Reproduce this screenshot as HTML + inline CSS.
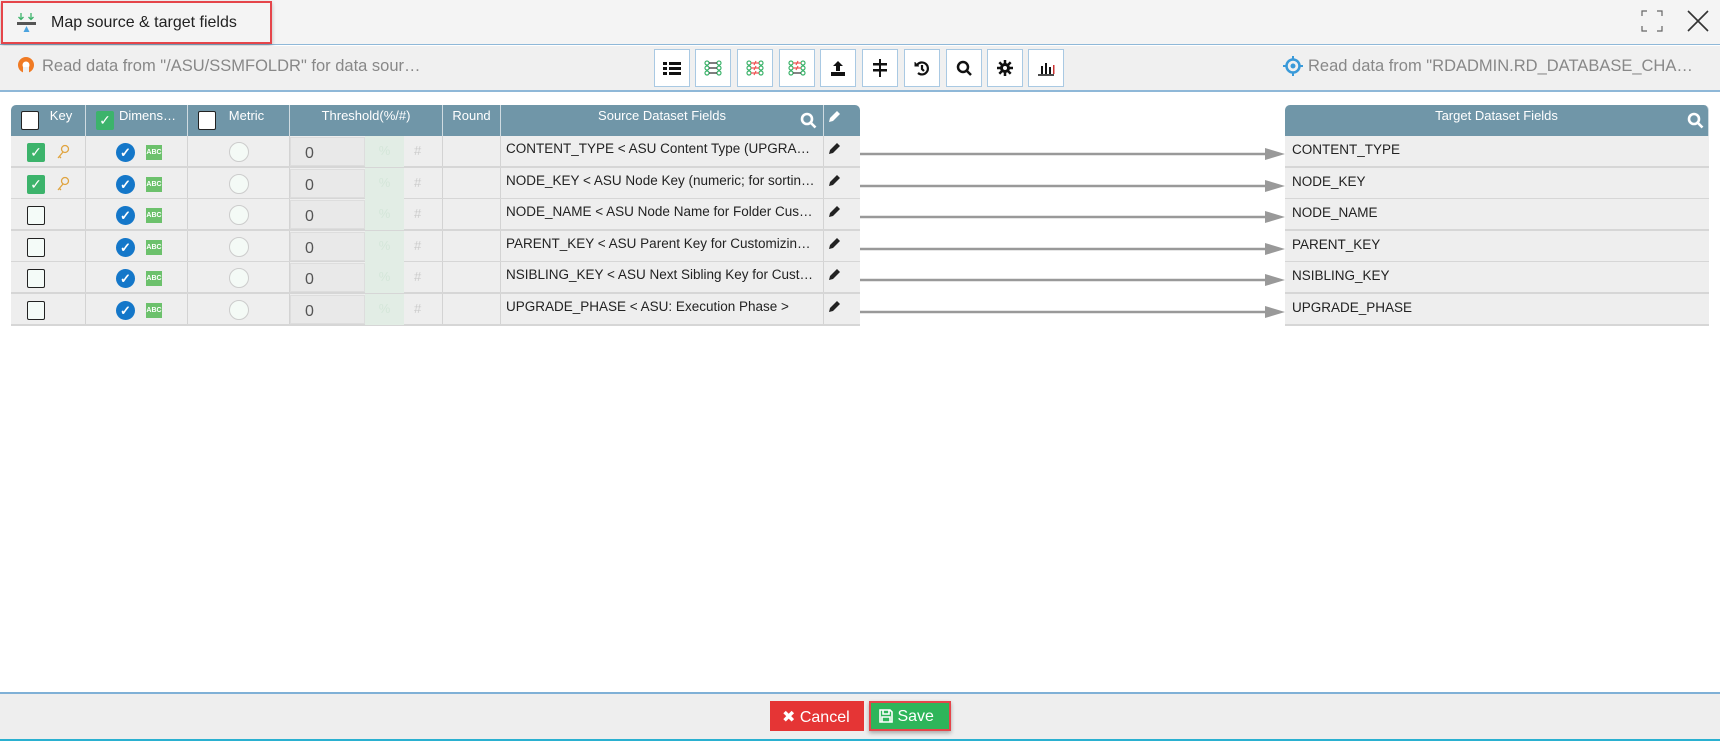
<!DOCTYPE html>
<html><head><meta charset="utf-8"><style>
*{box-sizing:border-box;margin:0;padding:0}
body{width:1720px;height:741px;overflow:hidden;background:#fff;font-family:"Liberation Sans",Arial,sans-serif;position:relative}
.abs{position:absolute}
.hdr{left:0;top:0;width:1720px;height:45px;background:#f4f4f4;border-bottom:1px solid #8fb8d8}
.title{left:1px;top:1px;width:271px;height:43px;border:2px solid #e5454a;box-shadow:0 2px 4px rgba(0,0,0,.25)}
.title span{position:absolute;left:48px;top:11px;font-size:16px;color:#222}
.tb{left:0;top:46px;width:1720px;height:46px;background:#f0f0f0;border-bottom:2px solid #8fb8d8}
.btn{top:49px;width:36px;height:38px;background:#fff;border:1px solid #a9c9e3;display:flex;align-items:center;justify-content:center}
.th{background:#7096a8;color:#fff;font-size:13px;text-align:center;height:31px;top:105px;padding-top:3px;border-right:1px solid #cfdbe1}
.row{left:11px;width:849px;height:32px;background:#eee;border-bottom:2px solid #d6d6d6}
.cell{position:absolute;top:0;height:30px;border-right:1px solid #d3d3d3}
.tgt{left:1285px;width:424px;height:32px;background:#eee;border-bottom:2px solid #d6d6d6;font-size:13.5px;color:#222;padding:6px 0 0 7px}
.cb{width:18px;height:19px;border:1.5px solid #222;border-radius:2px;background:#f4fbf8}
.gcb{width:18px;height:19px;background:#3cb36b;border-radius:2px;color:#fff;font-size:14px;text-align:center;line-height:19px}
.bc{width:19px;height:19px;border-radius:50%;background:#1477c9;color:#fff;font-size:13px;text-align:center;line-height:19px;font-weight:bold}
.abc{width:16px;height:15px;background:#6cc16c;color:#fff;font-size:7px;text-align:center;line-height:15px;font-weight:bold}
.rad{width:20px;height:20px;border-radius:50%;border:1px solid #ccc;background:#f4faf6}
</style></head><body>
<div class="abs hdr"></div>
<div class="abs title">
<svg class="abs" style="left:13px;top:9px" width="22" height="22" viewBox="0 0 22 22"><path d="M5 1v6M2.5 5L5 7.5 7.5 5M15 1v6M12.5 5L15 7.5 17.5 5" stroke="#3cb36b" stroke-width="1.3" fill="none"/><rect x="1" y="10" width="19" height="3" fill="#555"/><path d="M10.5 14l-3 6h6z" fill="#4aa3df"/></svg>
<span>Map source &amp; target fields</span></div>
<svg class="abs" style="left:1641px;top:10px" width="22" height="22" viewBox="0 0 22 22" fill="none" stroke="#666" stroke-width="1.2"><path d="M1 6V1h5M16 1h5v5M21 16v5h-5M6 21H1v-5"/></svg>
<svg class="abs" style="left:1687px;top:10px" width="22" height="22" viewBox="0 0 22 22" stroke="#333" stroke-width="1.6"><path d="M1 1l20 20M21 1L1 21"/></svg>
<div class="abs tb"></div>
<svg class="abs" style="left:17px;top:56px" width="18" height="20" viewBox="0 0 18 20"><circle cx="9" cy="9" r="8" fill="#f07a23"/><circle cx="9" cy="9" r="3.5" fill="#fff"/><rect x="6" y="11" width="6" height="9" fill="#f0f0f0"/></svg>
<div class="abs" style="left:42px;top:57px;font-size:16.5px;color:#888">Read data from "/ASU/SSMFOLDR" for data sour…</div>
<svg class="abs" style="left:1283px;top:56px" width="20" height="20" viewBox="0 0 20 20"><circle cx="10" cy="10" r="6.5" fill="none" stroke="#3a9ad9" stroke-width="2.5"/><circle cx="10" cy="10" r="2.5" fill="#3a9ad9"/><path d="M10 0v4M10 16v4M0 10h4M16 10h4" stroke="#3a9ad9" stroke-width="2"/></svg>
<div class="abs" style="left:1308px;top:57px;font-size:16.5px;color:#888">Read data from "RDADMIN.RD_DATABASE_CHA…</div>
<div class="abs btn" style="left:654px"><svg width="18" height="14"><path d="M0 1h4v3H0zM6 1h12v3H6zM0 6h4v3H0zM6 6h12v3H6zM0 11h4v3H0zM6 11h12v3H6z" fill="#111"/></svg></div>
<div class="abs btn" style="left:695px"><svg width="18" height="16" fill="none" stroke="#3cb36b" stroke-width="1.2"><circle cx="3" cy="3" r="2"/><circle cx="15" cy="3" r="2"/><circle cx="3" cy="8" r="2"/><circle cx="15" cy="8" r="2"/><circle cx="3" cy="13" r="2"/><circle cx="15" cy="13" r="2"/><path d="M5 3h8M5 8h8M5 13h8" stroke="#333"/></svg></div>
<div class="abs btn" style="left:737px"><svg width="18" height="16" fill="none" stroke="#3cb36b" stroke-width="1.2"><circle cx="3" cy="3" r="2"/><circle cx="15" cy="3" r="2"/><circle cx="3" cy="8" r="2"/><circle cx="15" cy="8" r="2"/><circle cx="3" cy="13" r="2"/><circle cx="15" cy="13" r="2"/><path d="M5 3h8M5 8h8M5 13h8M10 1l-2 4M10 6l-2 4M10 11l-2 4" stroke="#e55"/></svg></div>
<div class="abs btn" style="left:779px"><svg width="18" height="16" fill="none" stroke="#3cb36b" stroke-width="1.2"><circle cx="3" cy="3" r="2"/><circle cx="15" cy="3" r="2"/><circle cx="3" cy="8" r="2"/><circle cx="15" cy="8" r="2"/><circle cx="3" cy="13" r="2"/><circle cx="15" cy="13" r="2"/><path d="M5 3h8M5 8h8M10 1l-2 4M10 6l-2 4" stroke="#e55"/><path d="M5 13h8" stroke="#333"/></svg></div>
<div class="abs btn" style="left:820px"><svg width="16" height="16"><path d="M8 1l5 5h-3v5H6V6H3z" fill="#111"/><rect x="1" y="12" width="14" height="4" fill="#111"/></svg></div>
<div class="abs btn" style="left:862px"><svg width="16" height="18"><path d="M7 0h2v18H7z" fill="#111"/><rect x="1" y="4" width="14" height="2.5" fill="#111"/><rect x="1" y="10" width="14" height="2.5" fill="#111"/></svg></div>
<div class="abs btn" style="left:904px"><svg width="16" height="16" fill="none" stroke="#111" stroke-width="2.2"><path d="M3 5a6 6 0 1 1 1 8"/><path d="M8 5v4l2 2"/><path d="M1 2v4h4" fill="#111" stroke-width="1"/></svg></div>
<div class="abs btn" style="left:946px"><svg width="16" height="16" fill="none" stroke="#111" stroke-width="2.5"><circle cx="7" cy="7" r="5"/><path d="M11 11l4 4"/></svg></div>
<div class="abs btn" style="left:987px"><svg width="16" height="16"><circle cx="8" cy="8" r="5" fill="#111"/><path d="M8 0v16M0 8h16M2.3 2.3l11.4 11.4M13.7 2.3L2.3 13.7" stroke="#111" stroke-width="2.5"/><circle cx="8" cy="8" r="2" fill="#fff"/></svg></div>
<div class="abs btn" style="left:1028px"><svg width="18" height="16"><path d="M1 15h16" stroke="#111" stroke-width="1.5"/><path d="M4 6h2v8H4zM8 3h2v11H8zM12 7h2v7h-2z" fill="#111"/><path d="M16 5h1.5v9H16z" fill="#c33"/></svg></div>

<div class="abs th" style="left:11px;width:75px;border-radius:5px 0 0 0"><div class="cb abs" style="left:10px;top:6px;background:#fff"></div><span style="margin-left:26px">Key</span></div>
<div class="abs th" style="left:86px;width:102px"><div class="gcb abs" style="left:10px;top:6px">✓</div><span style="margin-left:22px">Dimens…</span></div>
<div class="abs th" style="left:188px;width:102px"><div class="cb abs" style="left:10px;top:6px;background:#fff"></div><span style="margin-left:16px">Metric</span></div>
<div class="abs th" style="left:290px;width:153px">Threshold(%/#)</div>
<div class="abs th" style="left:443px;width:58px">Round</div>
<div class="abs th" style="left:501px;width:323px">Source Dataset Fields<svg class="abs" style="right:6px;top:7px" width="17" height="17" fill="none" stroke="#fff" stroke-width="2.6"><circle cx="7" cy="7" r="5"/><path d="M11 11l4.5 4.5"/></svg></div>
<div class="abs th" style="left:824px;width:36px;border-radius:0 5px 0 0;border-right:none"><svg class="abs" style="left:4px;top:5px" width="13" height="13"><path d="M1 12l1-4 7-7 3 3-7 7z" fill="#fff"/></svg></div>
<div class="abs th" style="left:1285px;width:424px;border-radius:5px 5px 0 0">Target Dataset Fields<svg class="abs" style="right:4px;top:7px" width="17" height="17" fill="none" stroke="#fff" stroke-width="2.6"><circle cx="7" cy="7" r="5"/><path d="M11 11l4.5 4.5"/></svg></div>

<svg class="abs" style="left:860px;top:136px" width="425" height="200">
<g stroke="#999" stroke-width="2.5" fill="#999">
<path d="M0 18H405"/><path d="M405 12l20 6-20 6z" stroke="none"/>
<path d="M0 50H405"/><path d="M405 44l20 6-20 6z" stroke="none"/>
<path d="M0 81H405"/><path d="M405 75l20 6-20 6z" stroke="none"/>
<path d="M0 113H405"/><path d="M405 107l20 6-20 6z" stroke="none"/>
<path d="M0 144H405"/><path d="M405 138l20 6-20 6z" stroke="none"/>
<path d="M0 176H405"/><path d="M405 170l20 6-20 6z" stroke="none"/>
</g></svg>

<div id="rows"></div>
<script>
var src=["CONTENT_TYPE &lt; ASU Content Type (UPGRA…","NODE_KEY &lt; ASU Node Key (numeric; for sortin…","NODE_NAME &lt; ASU Node Name for Folder Cus…","PARENT_KEY &lt; ASU Parent Key for Customizin…","NSIBLING_KEY &lt; ASU Next Sibling Key for Cust…","UPGRADE_PHASE &lt; ASU: Execution Phase &gt;"];
var tgt=["CONTENT_TYPE","NODE_KEY","NODE_NAME","PARENT_KEY","NSIBLING_KEY","UPGRADE_PHASE"];
var h="";
for(var i=0;i<6;i++){var t=Math.round(136+i*31.6);
h+='<div class="abs row" style="top:'+t+'px">'+
'<div class="cell" style="left:0;width:75px">'+(i<2?'<div class="gcb abs" style="left:16px;top:7px">✓</div><svg class="abs" style="left:45px;top:8px" width="14" height="16" fill="none" stroke="#e0a440" stroke-width="1.3"><circle cx="9" cy="5" r="3.5"/><path d="M7 8L2 14M3 12l2 2"/></svg>':'<div class="cb abs" style="left:16px;top:7px"></div>')+'</div>'+
'<div class="cell" style="left:75px;width:102px"><div class="bc abs" style="left:30px;top:7px">✓</div><div class="abc abs" style="left:60px;top:9px">ABC</div></div>'+
'<div class="cell" style="left:177px;width:102px"><div class="rad abs" style="left:41px;top:6px"></div></div>'+
'<div class="cell" style="left:279px;width:153px"><div class="abs" style="left:0;top:1px;width:75px;height:29px;background:#e9e9e9;border:1px solid #ddd;font-size:16px;color:#555;padding:7px 0 0 14px">0</div><div class="abs" style="left:75px;top:0;width:39px;height:31px;background:#e2ede5;color:#d4e6d9;font-size:13px;text-align:center;padding-top:7px">%</div><div class="abs" style="left:124px;top:7px;font-size:13px;color:#ccc">#</div></div>'+
'<div class="cell" style="left:432px;width:58px"></div>'+
'<div class="cell" style="left:490px;width:323px;font-size:13.5px;color:#222;padding:5px 0 0 5px;white-space:nowrap;overflow:hidden">'+src[i]+'</div>'+
'<div class="cell" style="left:813px;width:36px;border:none"><svg class="abs" style="left:4px;top:6px" width="13" height="13"><path d="M1 12l1-4 7-7 3 3-7 7z" fill="#222"/></svg></div>'+
'</div><div class="abs tgt" style="top:'+t+'px">'+tgt[i]+'</div>';}
document.getElementById("rows").innerHTML=h;
</script>

<div class="abs" style="left:0;top:692px;width:1720px;height:49px;background:#eee;border-top:2px solid #7fb0d6;border-bottom:2px solid #2ab0d0"></div>
<div class="abs" style="left:770px;top:701px;width:94px;height:30px;background:#e53535;color:#fff;font-size:16px;padding:6px 0 0 12px">✖ Cancel</div>
<div class="abs" style="left:869px;top:701px;width:82px;height:30px;background:#2eb55a;border:2px solid #e5454a;color:#fff;font-size:16px;padding:5px 0 0 8px;box-shadow:0 2px 4px rgba(0,0,0,.3)"><svg width="14" height="14" style="vertical-align:-2px" fill="none" stroke="#fff" stroke-width="1.6"><path d="M1 1h10l2 2v10H1z"/><path d="M4 1v4h6V1M3 13V8h8v5"/></svg> Save</div>
</body></html>
